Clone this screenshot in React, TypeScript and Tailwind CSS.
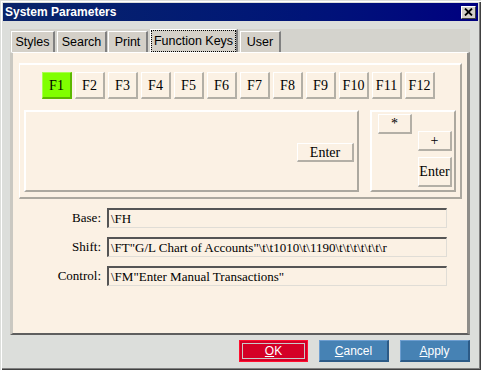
import React from 'react';

const serif = 'font-["Liberation_Serif",serif]';
const sans = 'font-["Liberation_Sans",Arial,sans-serif]';

const fkeys = ['F1', 'F2', 'F3', 'F4', 'F5', 'F6', 'F7', 'F8', 'F9', 'F10', 'F11', 'F12'];

const KeyButton = ({ label, className = '', active = false }: { label: string; className?: string; active?: boolean }) => (
  <div
    className={`flex items-center justify-center text-[14px] text-black ${serif} ${
      active
        ? 'bg-[#80ff00] border-t border-l border-[#a8ff50] border-r-2 border-b-2 border-r-[#5cb800] border-b-[#5cb800]'
        : 'bg-[#fbf1e4] border-t border-l border-white border-r-2 border-b-2 border-r-[#b3afa6] border-b-[#b3afa6]'
    } ${className}`}
  >
    {label}
  </div>
);

const Tab = ({ label, width, selected = false }: { label: string; width: string; selected?: boolean }) => (
  <div
    className={`${width} ${selected ? 'h-[23px]' : 'h-[21px]'} bg-[#d4d0c8] border-t border-l border-white border-r-2 border-r-[#808080] flex items-center justify-center text-[12.5px] text-black ${sans}`}
  >
    {selected ? (
      <div className="w-full h-full border border-dotted border-black flex items-center justify-center">{label}</div>
    ) : (
      label
    )}
  </div>
);

const Field = ({ label, value }: { label: string; value: string }) => (
  <div className="flex items-center gap-[6px]">
    <div className={`w-[82px] text-right text-[13px] text-black ${serif}`}>{label}</div>
    <div
      className={`w-[340px] h-[20px] bg-[#fbf1e4] border-t-2 border-l-2 border-t-[#555] border-l-[#555] border-r border-b border-r-[#e0ddd6] border-b-[#e0ddd6] pl-[2px] flex items-center text-[13px] text-black whitespace-nowrap overflow-hidden ${serif}`}
    >
      {value}
    </div>
  </div>
);

const FooterButton = ({ label, accel, primary = false }: { label: string; accel: string; primary?: boolean }) => (
  <div
    className={`h-[22px] flex items-center justify-center text-white text-[12px] ${sans} ${
      primary
        ? 'w-[69px] bg-[#d40026] border border-[#ff1030] p-[2px]'
        : 'w-[70px] bg-[#4682b4] border-t border-l border-[#6d9ed0] border-r-2 border-b-2 border-r-[#2c5a86] border-b-[#2c5a86]'
    }`}
  >
    {primary ? (
      <div className="w-full h-full border border-[#c8c8c8] flex items-center justify-center">
        <span className="underline">{accel}</span>
        {label}
      </div>
    ) : (
      <>
        <span className="underline">{accel}</span>
        {label}
      </>
    )}
  </div>
);

export default function App() {
  return (
    <div className="w-[481px] h-[370px] bg-[#dcdedb] p-[3px] shadow-[inset_1px_1px_0_#dcdedb,inset_2px_2px_0_#ffffff,inset_-1px_-1px_0_#404040,inset_-2px_-2px_0_#808080]">
      {/* title bar */}
      <div className="h-[18px] bg-linear-to-r from-[#0a246a] to-[#000080] flex items-center justify-between pl-[2px] pr-[2px]">
        <span className={`text-white font-bold text-[12px] ${sans}`}>System Parameters</span>
        <div className="w-[15px] h-[13px] bg-[#d4d0c8] border-t border-l border-white border-r border-b border-r-[#404040] border-b-[#404040] flex items-center justify-center">
          <svg width="9" height="8" viewBox="0 0 9 8">
            <path d="M1 0.5 L8 7.5 M8 0.5 L1 7.5" stroke="#000" strokeWidth="1.8" />
          </svg>
        </div>
      </div>

      <div className="mt-[8px] ml-[7px] w-[460px]">
        {/* tab strip */}
        <div className="h-[23px] bg-[#d4d3cd] flex items-end pl-[1px]">
          <Tab label="Styles" width="w-[44px]" />
          <div className="w-[2px]" />
          <Tab label="Search" width="w-[50px]" />
          <div className="w-[1px]" />
          <Tab label="Print" width="w-[40px]" />
          <div className="w-[2px]" />
          <Tab label="Function Keys" width="w-[88px]" selected />
          <div className="w-[2px]" />
          <Tab label="User" width="w-[41px]" />
        </div>

        {/* panel */}
        <div className="h-[283px] bg-[#fbf1e4] border-t border-t-white border-l-[3px] border-l-[#cac8c1] border-r-[3px] border-r-[#8e8d89] border-b-2 border-b-[#5e5e5e] pt-[10px] pl-[6px]">
          <div className="w-[443px] h-[136px] border-t-2 border-l border-white border-r-2 border-b-2 border-r-[#aca89f] border-b-[#aca89f]">
            <div className="flex gap-[3px] mt-[7px] ml-[22px]">
              {fkeys.map((k) => (
                <KeyButton key={k} label={k} active={k === 'F1'} className="w-[30px] h-[27px]" />
              ))}
            </div>
            <div className="flex gap-[11px] mt-[11px] ml-[4px]">
              <div className="w-[335px] h-[82px] border-t-2 border-l-2 border-white border-r-2 border-b-2 border-r-[#aca89f] border-b-[#aca89f] flex justify-end pr-[3px] pt-[31px]">
                <KeyButton label="Enter" className="w-[57px] h-[19px]" />
              </div>
              <div className="w-[86px] h-[82px] border-t-2 border-l-2 border-white border-r-2 border-b-2 border-r-[#aca89f] border-b-[#aca89f]">
                <div className="pl-[6px] pt-[2px]">
                  <KeyButton label="*" className="w-[34px] h-[20px]" />
                </div>
                <div className="pl-[46px] mt-[-3px]">
                  <KeyButton label="+" className="w-[34px] h-[20px]" />
                </div>
                <div className="pl-[46px] mt-[6px]">
                  <KeyButton label="Enter" className="w-[34px] h-[30px]" />
                </div>
              </div>
            </div>
          </div>

          <div className="mt-[9px] flex flex-col gap-[9px]">
            <Field label="Base:" value={'\\FH'} />
            <Field label="Shift:" value={'\\FT"G/L Chart of Accounts"\\t\\t1010\\t\\1190\\t\\t\\t\\t\\t\\t\\r'} />
            <Field label="Control:" value={'\\FM"Enter Manual Transactions"'} />
          </div>
        </div>

        {/* footer */}
        <div className="mt-[5px] flex justify-end gap-[11px]">
          <FooterButton label="K" accel="O" primary />
          <FooterButton label="ancel" accel="C" />
          <FooterButton label="pply" accel="A" />
        </div>
      </div>
    </div>
  );
}
